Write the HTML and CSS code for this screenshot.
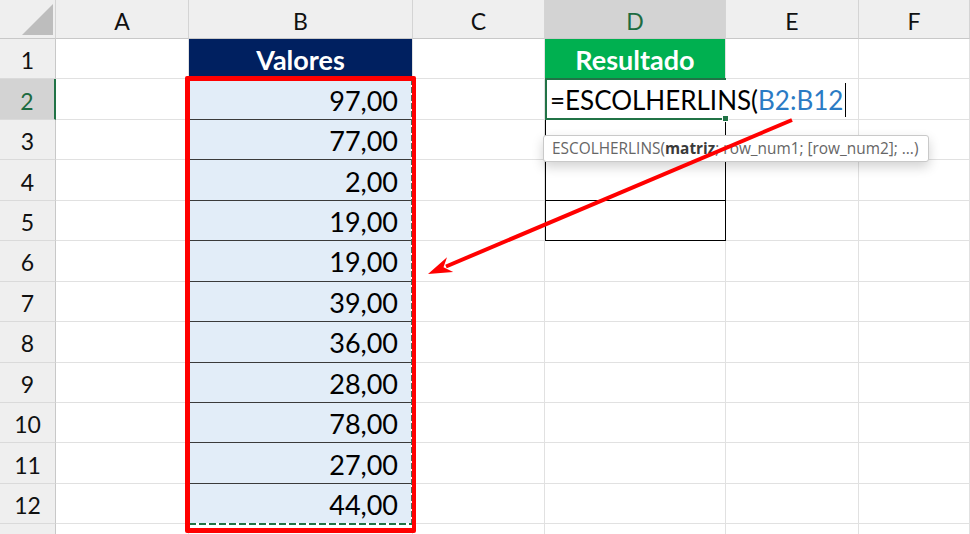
FILE: index.html
```html
<!DOCTYPE html>
<html lang="pt">
<head>
<meta charset="utf-8">
<title>ESCOLHERLINS</title>
<link rel="stylesheet" href="styles.css">
</head>
<body>
<div class="sheet">
  <div class="grid">
    <div class="ch corner"><svg class="tri" width="56" height="39" viewBox="0 0 56 39"><polygon points="22,35 53,35 53,4" fill="#bdbdbd"/></svg></div>
    <div class="ch">A</div>
    <div class="ch">B</div>
    <div class="ch">C</div>
    <div class="ch sel">D</div>
    <div class="ch">E</div>
    <div class="ch">F</div>

    <div class="rh">1</div>
    <div class="c"></div>
    <div class="c hdr-b">Valores</div>
    <div class="c"></div>
    <div class="c hdr-d">Resultado</div>
    <div class="c"></div>
    <div class="c"></div>

    <div class="rh sel">2</div>
    <div class="c"></div>
    <div class="c val">97,00</div>
    <div class="c"></div>
    <div class="c d-edit"><span class="formula">=ESCOLHERLINS(<span class="ref">B2:B12</span><span class="caret"></span></span><span class="handle"></span></div>
    <div class="c"></div>
    <div class="c"></div>

    <div class="rh">3</div>
    <div class="c"></div>
    <div class="c val">77,00</div>
    <div class="c"></div>
    <div class="c d-box"></div>
    <div class="c"></div>
    <div class="c"></div>

    <div class="rh">4</div>
    <div class="c"></div>
    <div class="c val">2,00</div>
    <div class="c"></div>
    <div class="c d-box"></div>
    <div class="c"></div>
    <div class="c"></div>

    <div class="rh">5</div>
    <div class="c"></div>
    <div class="c val">19,00</div>
    <div class="c"></div>
    <div class="c d-box"></div>
    <div class="c"></div>
    <div class="c"></div>

    <div class="rh">6</div>
    <div class="c"></div>
    <div class="c val">19,00</div>
    <div class="c"></div>
    <div class="c"></div>
    <div class="c"></div>
    <div class="c"></div>

    <div class="rh">7</div>
    <div class="c"></div>
    <div class="c val">39,00</div>
    <div class="c"></div>
    <div class="c"></div>
    <div class="c"></div>
    <div class="c"></div>

    <div class="rh">8</div>
    <div class="c"></div>
    <div class="c val">36,00</div>
    <div class="c"></div>
    <div class="c"></div>
    <div class="c"></div>
    <div class="c"></div>

    <div class="rh">9</div>
    <div class="c"></div>
    <div class="c val">28,00</div>
    <div class="c"></div>
    <div class="c"></div>
    <div class="c"></div>
    <div class="c"></div>

    <div class="rh">10</div>
    <div class="c"></div>
    <div class="c val">78,00</div>
    <div class="c"></div>
    <div class="c"></div>
    <div class="c"></div>
    <div class="c"></div>

    <div class="rh">11</div>
    <div class="c"></div>
    <div class="c val">27,00</div>
    <div class="c"></div>
    <div class="c"></div>
    <div class="c"></div>
    <div class="c"></div>

    <div class="rh">12</div>
    <div class="c"></div>
    <div class="c val">44,00</div>
    <div class="c"></div>
    <div class="c"></div>
    <div class="c"></div>
    <div class="c"></div>

    <div class="rh"></div>
    <div class="c"></div>
    <div class="c"></div>
    <div class="c"></div>
    <div class="c"></div>
    <div class="c"></div>
    <div class="c"></div>
  </div>

  <div class="ants"></div>
  <div class="redbox"></div>
  <div class="tooltip">ESCOLHERLINS(<b>matriz</b>; row_num1; [row_num2]; ...)</div>
  <svg class="arrow" width="970" height="534" viewBox="0 0 970 534">
    <line x1="792" y1="120" x2="446" y2="266.5" stroke="#ff0000" stroke-width="4"/>
    <polygon points="428,274 447,257.3 443.5,267.3 453.2,272" fill="#ff0000"/>
  </svg>
</div>
</body>
</html>
```

FILE: styles.css
```css
html, body {
  margin: 0;
  padding: 0;
  background: #ffffff;
  overflow: hidden;
}

.sheet {
  position: relative;
  width: 970px;
  height: 534px;
  overflow: hidden;
  font-family: Lato, "Liberation Sans", sans-serif;
  color: #000;
}

.grid {
  display: grid;
  grid-template-columns: 56px 133px 224px 132px 181px 133px 111px;
  grid-template-rows: 39px repeat(12, 40.45px) 40px;
}

.grid > div {
  box-sizing: border-box;
  display: flex;
  align-items: center;
  min-width: 0;
}

.c {
  border-right: 1px solid #e1e1e1;
  border-bottom: 1px solid #e1e1e1;
}

.ch {
  background: #efefef;
  border-right: 1px solid #d4d4d4;
  border-bottom: 1px solid #c8c8c8;
  justify-content: center;
  font-size: 23px;
  padding-top: 3px;
  color: #111;
}

.ch.sel {
  background: #d3d3d3;
  color: #1d6b40;
}

.corner {
  padding-top: 0;
  position: relative;
}

.tri {
  position: absolute;
  left: 0;
  top: 0;
}

.rh {
  background: #efefef;
  border-right: 1px solid #c8c8c8;
  border-bottom: 1px solid #dadada;
  justify-content: center;
  font-size: 23px;
  padding-top: 3px;
  color: #111;
}

.rh.sel {
  background: #d3d3d3;
  color: #1d6b40;
  border-right: 2px solid #217346;
}

.hdr-b {
  background: #002060;
  color: #ffffff;
  font-weight: 700;
  font-size: 27px;
  justify-content: center;
  padding-top: 1px;
}

.hdr-d {
  background: #00b050;
  color: #ffffff;
  font-weight: 700;
  font-size: 27px;
  justify-content: center;
  padding-top: 1px;
}

.val {
  background: #e2edf8;
  border-bottom: 1px solid #3a3a3a;
  justify-content: flex-end;
  padding-right: 14px;
  padding-top: 2px;
  font-size: 27px;
}

.d-edit {
  position: relative;
  border-top: 2px solid #217346;
  border-left: 2px solid #217346;
  border-bottom: 2px solid #217346;
  border-right: none;
  margin-top: -1px;
  overflow: visible;
  z-index: 2;
  padding-left: 3px;
  padding-top: 2px;
}

.formula {
  font-size: 26px;
  white-space: nowrap;
  display: flex;
  align-items: center;
  background: #ffffff;
}

.ref {
  color: #2b7bc4;
}

.caret {
  display: inline-block;
  width: 1px;
  height: 34px;
  background: #000;
  margin-left: 2px;
}

.handle {
  position: absolute;
  right: -3px;
  bottom: -4px;
  width: 5px;
  height: 5px;
  background: #217346;
  border: 1px solid #fff;
}

.d-box {
  border-right: 1px solid #000;
  border-bottom: 1px solid #000;
  box-shadow: inset 1px 0 0 #000;
}

.ants {
  position: absolute;
  left: 189px;
  top: 79px;
  width: 224px;
  height: 446px;
  box-sizing: border-box;
  background:
    repeating-linear-gradient(90deg, #217346 0 7px, #ffffff 7px 10px) left bottom / 100% 2px no-repeat,
    repeating-linear-gradient(180deg, #4d6b5a 0 6px, #ffffff 6px 8px) right top / 2px 100% no-repeat;
}

.redbox {
  position: absolute;
  left: 185px;
  top: 76px;
  width: 231px;
  height: 457px;
  box-sizing: border-box;
  border: 5px solid #ff0000;
  border-right-width: 4px;
  border-radius: 2px;
}

.tooltip {
  position: absolute;
  left: 543px;
  top: 135px;
  width: 386px;
  height: 27px;
  box-sizing: border-box;
  background: #ffffff;
  border: 1px solid #c9c9c9;
  border-radius: 3px;
  box-shadow: 0 5px 12px rgba(0, 0, 0, 0.18);
  font-family: "Open Sans", "Noto Sans", sans-serif;
  font-size: 15.4px;
  color: #666;
  padding-left: 8px;
  line-height: 25px;
  white-space: nowrap;
  z-index: 3;
}

.tooltip b {
  color: #3a3a3a;
  font-weight: 700;
}

.arrow {
  position: absolute;
  left: 0;
  top: 0;
  z-index: 4;
  pointer-events: none;
}
```
